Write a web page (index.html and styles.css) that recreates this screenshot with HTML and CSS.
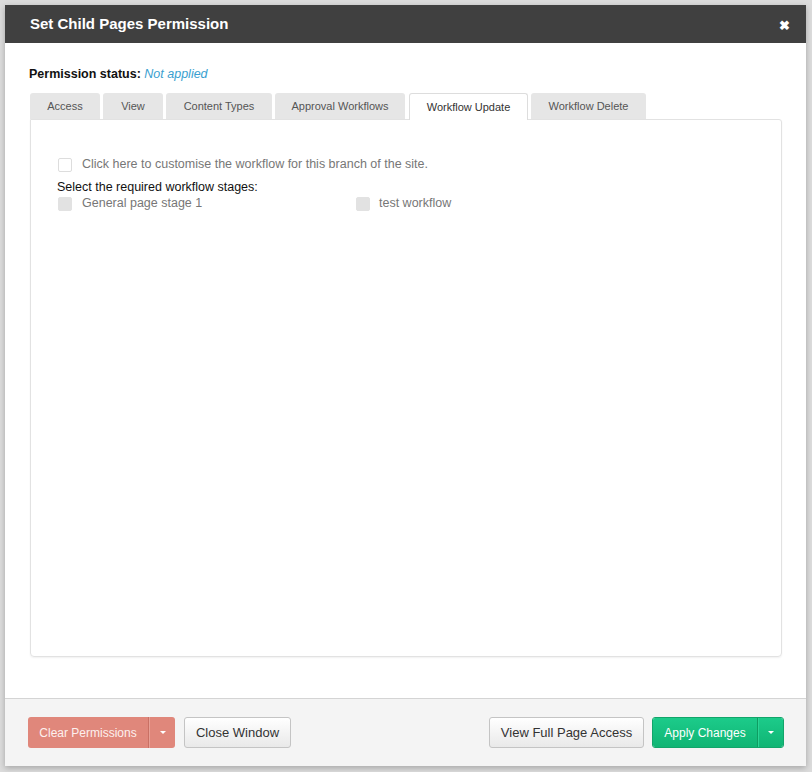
FILE: index.html
```html
<!DOCTYPE html>
<html>
<head>
<meta charset="utf-8">
<link rel="stylesheet" href="styles.css">
</head>
<body>
<div class="modal">
  <div class="modal-header">
    <span class="title">Set Child Pages Permission</span>
    <span class="close">&#x2716;</span>
  </div>
  <div class="modal-body">
    <div class="status"><b>Permission status:</b> <i>Not applied</i></div>
    <div class="tabs">
      <div class="tab t-access">Access</div>
      <div class="tab t-view">View</div>
      <div class="tab t-ct">Content Types</div>
      <div class="tab t-aw">Approval Workflows</div>
      <div class="tab active t-wu">Workflow Update</div>
      <div class="tab t-wd">Workflow Delete</div>
    </div>
    <div class="panel">
      <label class="check-row customise"><span class="cb"></span><span>Click here to customise the workflow for this branch of the site.</span></label>
      <div class="select-label">Select the required workflow stages:</div>
      <div class="stages">
        <label class="check-row stage"><span class="cb disabled"></span><span>General page stage 1</span></label>
        <label class="check-row stage"><span class="cb disabled"></span><span>test workflow</span></label>
      </div>
    </div>
  </div>
  <div class="modal-footer">
    <div class="group">
      <div class="btn-split danger">
        <span class="main">Clear Permissions</span><span class="caret-part"><span class="caret"></span></span>
      </div>
      <div class="btn default close-btn">Close Window</div>
    </div>
    <div class="group">
      <div class="btn default view-btn">View Full Page Access</div>
      <div class="btn-split success">
        <span class="main">Apply Changes</span><span class="caret-part"><span class="caret"></span></span>
      </div>
    </div>
  </div>
</div>
</body>
</html>
```
FILE: styles.css
```css
html, body {
  margin: 0;
  padding: 0;
}
body {
  background: #dcdcdc;
  font-family: "Liberation Sans", Arial, sans-serif;
  padding: 5px 6px 6px 5px;
  height: 772px;
  box-sizing: border-box;
}
.modal {
  width: 801px;
  height: 761px;
  background: #fff;
  display: flex;
  flex-direction: column;
  box-shadow: 0 2px 6px rgba(0,0,0,0.25);
}
.modal-header {
  height: 38px;
  background: #404040;
  display: flex;
  align-items: center;
  justify-content: space-between;
  padding: 0 16px 0 25px;
  flex-shrink: 0;
}
.title {
  color: #fff;
  font-weight: bold;
  font-size: 15px;
  position: relative;
  top: -1px;
}
.close {
  color: #fff;
  font-size: 13px;
  font-weight: bold;
  position: relative;
  top: 1px;
}
.modal-body {
  flex: 1;
  padding: 24px 24px 41px 25px;
  display: flex;
  flex-direction: column;
}
.status {
  font-size: 12.5px;
  color: #111;
  margin-left: -1px;
  line-height: 14px;
}
.status i {
  color: #3a9fd0;
}
.tabs {
  display: flex;
  gap: 3px;
  margin-top: 12px;
  height: 26px;
}
.tab {
  background: #e6e6e6;
  font-size: 11px;
  color: #555;
  display: flex;
  align-items: center;
  justify-content: center;
  border-radius: 3px 3px 0 0;
  box-sizing: border-box;
  height: 26px;
}
.t-access { width: 70px; }
.t-view { width: 60px; }
.t-ct { width: 106px; }
.t-aw { width: 130px; }
.t-wu { width: 119px; margin-left: 1px; }
.t-wd { width: 115px; }
.tab.active {
  background: #fff;
  color: #333;
  border: 1px solid #ddd;
  border-bottom: none;
  height: 27px;
  position: relative;
  z-index: 1;
}
.panel {
  flex: 1;
  border: 1px solid #e2e2e2;
  border-radius: 0 3px 4px 4px;
  box-shadow: 0 1px 2px rgba(0,0,0,0.06);
  padding: 37px 26px 0 26px;
}
.check-row {
  display: flex;
  align-items: center;
  font-size: 12.5px;
  color: #777;
  line-height: 15px;
}
.cb {
  width: 12px;
  height: 12px;
  border: 1px solid #ddd;
  border-radius: 2px;
  background: #fff;
  margin-right: 10px;
  margin-left: 1px;
  flex-shrink: 0;
}
.cb.disabled {
  background: #e2e2e2;
  border-color: #e2e2e2;
}
.select-label {
  font-size: 12.5px;
  color: #111;
  margin-top: 8px;
  line-height: 15px;
}
.stages {
  display: grid;
  grid-template-columns: 298px 1fr;
  margin-top: 1px;
}
.stage .cb {
  margin-right: 10px;
}
.stage:nth-child(2) .cb {
  margin-right: 9px;
}
.modal-footer {
  height: 68px;
  flex-shrink: 0;
  background: #f4f4f4;
  border-top: 1px solid #d4d4d4;
  box-sizing: border-box;
  display: flex;
  justify-content: space-between;
  align-items: flex-start;
  padding: 18px 22px 0 23px;
}
.group {
  display: flex;
  gap: 9px;
}
.btn {
  height: 31px;
  box-sizing: border-box;
  display: flex;
  align-items: center;
  justify-content: center;
  font-size: 13px;
  border-radius: 3px;
  padding: 0;
  white-space: nowrap;
}
.btn.default {
  background: linear-gradient(#fff, #e9e9e9);
  border: 1px solid #c4c4c4;
  color: #333;
}
.close-btn { width: 107px; }
.view-btn { width: 155px; }
.btn-split {
  display: flex;
  height: 31px;
  border-radius: 3px;
  overflow: hidden;
  font-size: 12px;
  color: #fff;
  white-space: nowrap;
}
.btn-split .main {
  display: flex;
  align-items: center;
  justify-content: center;
}
.btn-split .caret-part {
  width: 25px;
  display: flex;
  align-items: center;
  justify-content: center;
}
.caret {
  width: 0;
  height: 0;
  border-left: 3px solid transparent;
  border-right: 3px solid transparent;
  border-top: 3px solid #fff;
}
.danger .main {
  width: 121px;
  background: #e0877b;
  color: #fdf0ee;
  border-right: 1px solid #c97064;
  box-sizing: border-box;
}
.danger .caret-part {
  background: #e0877b;
  border-left: 1px solid #e8a096;
}
.success {
  border: 1px solid #12a56a;
  box-sizing: border-box;
}
.success .main {
  width: 105px;
  background: linear-gradient(#1ccb8a, #10b574);
  border-right: 1px solid #0f9c62;
  box-sizing: border-box;
}
.success .caret-part {
  width: 24px;
  background: linear-gradient(#1ccb8a, #10b574);
  border-left: 1px solid #2bd596;
}
.group:last-child { gap: 8px; }
```
